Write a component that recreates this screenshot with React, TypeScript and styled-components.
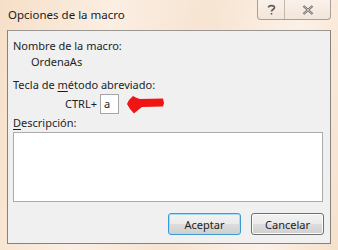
import React, { FC } from 'react';
import styled, { createGlobalStyle } from 'styled-components';

const GlobalStyle = createGlobalStyle`
  html, body {
    margin: 0;
    padding: 0;
  }
  body {
    font-family: "Noto Sans", "Open Sans", sans-serif;
    font-size: 11px;
    color: #1e1e1e;
  }
`;

const Frame = styled.div`
  width: 338px;
  height: 250px;
  display: flex;
  flex-direction: column;
  background: linear-gradient(100deg, #f6dfc8 0%, #fbeee2 30%, #f7e4d2 55%, #fcf1e7 80%, #f6e0cb 100%);
  overflow: hidden;
`;

const TitleBar = styled.div`
  height: 30px;
  display: flex;
  justify-content: space-between;
  align-items: flex-start;
  padding: 0 7px 0 8px;
`;

const Title = styled.div`
  margin-top: 7px;
  font-size: 11.5px;
  color: #1a1a1a;
`;

const CaptionButtons = styled.div`
  display: flex;
  height: 19px;
  border: 1px solid #a89f96;
  border-top: none;
  border-radius: 0 0 4px 4px;
  background: linear-gradient(#f9f1ea, #f3e6da);
  overflow: hidden;
`;

const CaptionButton = styled.div<{ $w: number; $sep?: boolean }>`
  width: ${p => p.$w}px;
  display: flex;
  align-items: center;
  justify-content: center;
  border-right: ${p => (p.$sep ? '1px solid #c2b8ae' : 'none')};
`;

const Client = styled.div`
  margin: 0 7px;
  height: 214px;
  background: #f0f0f0;
  border: 1px solid #86827e;
  border-top-color: #9a9792;
  display: flex;
  flex-direction: column;
  padding: 7px 6px 0 5px;
  box-sizing: border-box;
`;

const Label = styled.div<{ $gap?: number }>`
  line-height: 15px;
  margin-top: ${p => p.$gap ?? 0}px;
`;

const Value = styled.div`
  padding-left: 18px;
  margin-top: 1px;
  line-height: 15px;
`;

const ShortcutRow = styled.div`
  display: flex;
  align-items: center;
  padding-left: 52px;
  margin-top: 1px;
  height: 21px;
`;

const KeyBox = styled.div`
  width: 14px;
  height: 18px;
  margin-left: 3px;
  border: 1px solid #a5a5a5;
  background: #fff;
  display: flex;
  align-items: center;
  padding-left: 3px;
`;

const Arrow = styled.svg`
  margin-left: 7px;
  margin-top: 1px;
`;

const TextArea = styled.div`
  margin-top: 2px;
  margin-right: 1px;
  height: 68px;
  border: 1px solid #ababab;
  background: #fff;
`;

const ButtonRow = styled.div`
  display: flex;
  justify-content: flex-end;
  gap: 10px;
  margin-top: 11px;
  padding-right: 0px;
`;

const Button = styled.div<{ $default?: boolean }>`
  width: 71px;
  height: 20px;
  border: 1px solid ${p => (p.$default ? '#3c9ad6' : '#707070')};
  border-radius: 3px;
  background: linear-gradient(#f2f2f2 0%, #ebebeb 48%, #dddddd 52%, #cfcfcf 100%);
  box-shadow: inset 0 0 0 1px ${p => (p.$default ? '#a6dcf5' : '#fbfbfb')};
  display: flex;
  align-items: center;
  justify-content: center;
`;

const U = styled.span`
  text-decoration: underline;
  text-underline-offset: 2px;
`;

const App: FC = () => {
  return (
    <>
      <GlobalStyle />
      <Frame>
        <TitleBar>
          <Title>Opciones de la macro</Title>
          <CaptionButtons>
            <CaptionButton $w={26} $sep>
              <svg width="9" height="12" viewBox="0 0 9 12">
                <path d="M1.5 3.5 C1.5 1 7.5 1 7.5 3.5 C7.5 5.5 4.5 5.5 4.5 7.5 M4.5 9 L4.5 10.5" fill="none" stroke="#5a5a5a" strokeWidth="1.6" />
              </svg>
            </CaptionButton>
            <CaptionButton $w={45}>
              <svg width="12" height="10" viewBox="0 0 12 10">
                <path d="M1.5 1 L10.5 9 M10.5 1 L1.5 9" stroke="#5a5a5a" strokeWidth="2.2" />
                <path d="M1.5 1 L10.5 9 M10.5 1 L1.5 9" stroke="#f5ece3" strokeWidth="0.8" />
              </svg>
            </CaptionButton>
          </CaptionButtons>
        </TitleBar>
        <Client>
          <Label>Nombre de la macro:</Label>
          <Value>OrdenaAs</Value>
          <Label $gap={8}>
            Tecla de <U>m</U>étodo abreviado:
          </Label>
          <ShortcutRow>
            <span>CTRL+</span>
            <KeyBox>a</KeyBox>
            <Arrow width="40" height="21" viewBox="0 0 40 21">
              <path
                d="M1 10 Q3 5 7 2 Q10 4 14 5 L37 4.5 Q38.8 8.5 37 12.5 L16 13 Q12 16 8 19.5 Q4 16 1 10 Z"
                fill="#f01414"
              />
            </Arrow>
          </ShortcutRow>
          <Label $gap={1}>
            <U>D</U>escripción:
          </Label>
          <TextArea />
          <ButtonRow>
            <Button $default>Aceptar</Button>
            <Button>Cancelar</Button>
          </ButtonRow>
        </Client>
      </Frame>
    </>
  );
};

export default App;
